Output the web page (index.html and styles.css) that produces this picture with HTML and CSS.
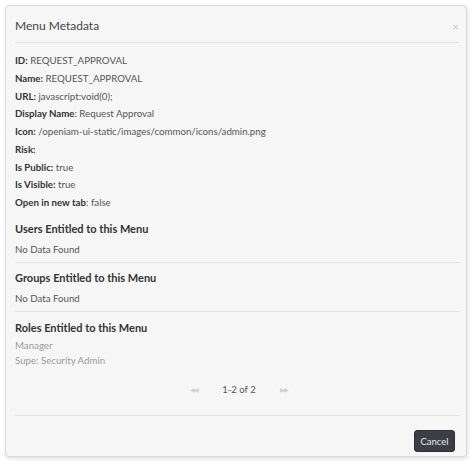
FILE: index.html
```html
<!DOCTYPE html>
<html>
<head>
<meta charset="utf-8">
<link rel="stylesheet" href="styles.css">
</head>
<body>
<div class="modal">
  <div class="modal-header">
    <h4 class="modal-title">Menu Metadata</h4>
    <span class="close">&times;</span>
  </div>
  <div class="modal-body">
    <div class="props">
      <div class="prop"><b>ID:</b> REQUEST_APPROVAL</div>
      <div class="prop"><b>Name:</b> REQUEST_APPROVAL</div>
      <div class="prop"><b>URL:</b> javascript:void(0);</div>
      <div class="prop"><b>Display Name</b>: Request Approval</div>
      <div class="prop"><b>Icon:</b> /openiam-ui-static/images/common/icons/admin.png</div>
      <div class="prop"><b>Risk:</b></div>
      <div class="prop"><b>Is Public:</b> true</div>
      <div class="prop"><b>Is Visible:</b> true</div>
      <div class="prop"><b>Open in new tab</b>: false</div>
    </div>
    <div class="section first">
      <h5 class="section-title">Users Entitled to this Menu</h5>
      <div class="empty">No Data Found</div>
    </div>
    <div class="section">
      <h5 class="section-title">Groups Entitled to this Menu</h5>
      <div class="empty">No Data Found</div>
    </div>
    <div class="section last">
      <h5 class="section-title">Roles Entitled to this Menu</h5>
      <ul class="role-list">
        <li>Manager</li>
        <li>Supe: Security Admin</li>
      </ul>
      <div class="pager">
        <span class="pager-arrow">&#9664;&#9664;</span>
        <span class="pager-info">1-2 of 2</span>
        <span class="pager-arrow">&#9654;&#9654;</span>
      </div>
    </div>
  </div>
  <div class="modal-footer">
    <button class="btn">Cancel</button>
  </div>
</div>
</body>
</html>
```
FILE: styles.css
```css
html, body {
  margin: 0;
  background: #ffffff;
}

body {
  padding: 5px 7px 7px 5px;
  font-family: "Lato", "Noto Sans", sans-serif;
  color: #555;
}

.modal {
  height: 452px;
  box-sizing: border-box;
  background: #f6f6f6;
  border: 1px solid #d9d9d9;
  border-radius: 4px;
  box-shadow: 1px 2px 4px rgba(0, 0, 0, 0.12);
  padding: 0 7px 0 9px;
  display: flex;
  flex-direction: column;
}

.modal-header {
  display: flex;
  align-items: center;
  justify-content: space-between;
  height: 36px;
  border-bottom: 1px solid #e2e2e2;
}

.modal-title {
  margin: 0;
  font-size: 12px;
  font-weight: normal;
  color: #444;
  padding-top: 3px;
}

.close {
  font-size: 11px;
  color: #c8c8c8;
  margin-right: 0;
  padding-top: 5px;
}

.modal-body {
  flex: 1;
  padding-top: 9px;
  font-size: 9.7px;
}

.props {
  margin-bottom: 1px;
}

.prop {
  line-height: 17.75px;
  color: #555;
}

.prop b {
  color: #333;
  font-weight: 700;
}

.section {
  border-bottom: 1px solid #e2e2e2;
  padding: 7px 0 4px;
}

.section.first,
.section.last {
  padding-top: 8px;
}

.section.last {
  border-bottom: none;
}

.section-title {
  margin: 0;
  font-size: 11px;
  line-height: 16px;
  font-weight: 700;
  color: #333;
}

.empty {
  line-height: 18px;
  margin-top: 3px;
  color: #555;
}

.role-list {
  list-style: none;
  margin: 2px 0 0;
  padding: 0;
  color: #9a9a9a;
}

.role-list li {
  line-height: 15px;
}

.pager {
  display: flex;
  justify-content: center;
  align-items: center;
  gap: 24px;
  margin-top: 12px;
  height: 20px;
  margin-left: 4px;
}

.pager-arrow {
  font-size: 6px;
  letter-spacing: -1px;
  color: #cfcfcf;
}

.pager-info {
  font-size: 9.5px;
  color: #555;
}

.modal-footer {
  border-top: 1px solid #e2e2e2;
  display: flex;
  justify-content: flex-end;
  padding: 14px 4px 4px 0;
}

.btn {
  font-family: inherit;
  font-size: 9.5px;
  color: #e8e8e8;
  background: #3b3e46;
  border: 1px solid #2e3037;
  border-radius: 3px;
  height: 22px;
  width: 41px;
  padding: 0;
}
```
